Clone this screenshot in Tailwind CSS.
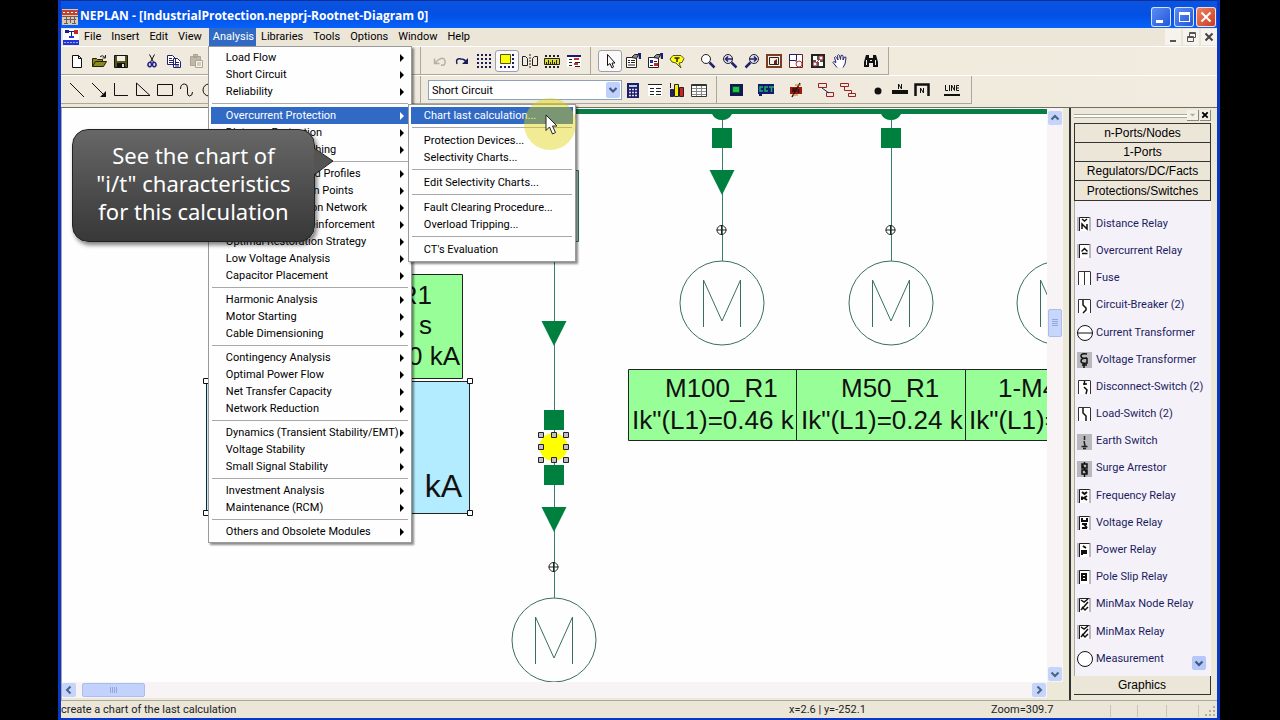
<!DOCTYPE html>
<html lang="en">
<head>
    <meta charset="UTF-8">
    <meta name="viewport" content="width=device-width, initial-scale=1.0">
    <title>NEPLAN</title>
    <script src="https://cdn.jsdelivr.net/npm/@tailwindcss/browser@4"></script>
</head>
<body class="bg-black pr-[60px] pl-[58px] font-[Roboto,sans-serif] text-[11px] text-black">
<div class="relative flex h-screen flex-col overflow-hidden border-x-[3px] border-b-2 border-[#0a37c4] bg-[#ece9d8]">

    <!-- Title bar -->
    <header class="flex h-[28px] shrink-0 items-center border-t border-[#0a2f9c] bg-linear-to-b from-[#0b54e0] via-[#0450e4] to-[#0562fb] pr-px text-white">
        <svg class="mx-px mt-1 h-4 w-4" viewBox="0 0 16 16" shape-rendering="crispEdges">
            <path fill="#d9c8b8" d="M0 0h16v16H0z"/><path fill="#c0432e" d="M0 1h16v5H0z"/>
            <path stroke="#fff" d="M1 3.500h2M5 3.500h2M9 3.500h2M13 3.500h2"/>
            <path stroke="#6b5d55" fill="none" d="M0 7.500h16M2 10.500h12M4 8v7M8 8v6M12 8v7M2 14.500h4M10 14.500h4"/>
        </svg>
        <h1 class="mt-[2px] ml-px flex-1 font-['Open_Sans',sans-serif] text-[12px] font-bold">NEPLAN - [IndustrialProtection.nepprj-Rootnet-Diagram 0]</h1>
        <div class="mt-1 flex gap-[2px]">
            <button aria-label="Minimize" class="h-5 w-5 rounded-[3px] border border-white/80 bg-linear-to-br from-[#5a8cf5] to-[#2456d8]"><svg class="h-full w-full" viewBox="0 0 18 18"><path fill="#fff" d="M4 12h7v3H4z"/></svg></button>
            <button aria-label="Maximize" class="ml-px h-5 w-5 rounded-[3px] border border-white/80 bg-linear-to-br from-[#5a8cf5] to-[#2456d8]"><svg class="h-full w-full" viewBox="0 0 18 18"><path fill="#fff" fill-rule="evenodd" d="M4 4h11v10H4zM5 7v6h9V7z"/></svg></button>
            <button aria-label="Close" class="h-5 w-5 rounded-[3px] border border-white/80 bg-linear-to-br from-[#ee8263] to-[#c93a17]"><svg class="h-full w-full" viewBox="0 0 18 18"><path stroke="#fff" stroke-width="2" d="M4.500 4.500l9 9M13.500 4.500l-9 9"/></svg></button>
        </div>
    </header>

    <!-- Menu bar -->
    <nav class="relative z-20 flex h-[18px] shrink-0 items-stretch bg-[#ece6d8]">
        <svg class="mt-px ml-[2px] h-4 w-4" viewBox="0 0 16 16" shape-rendering="crispEdges">
            <path fill="#fff" d="M0 0h16v16H0z"/><path fill="#1a1a8c" d="M2 1h4v3H2z"/><path fill="#c22" d="M11 1h4v4h-4z"/>
            <path stroke="#1a1a8c" fill="none" d="M6 2.500h5M8.500 3v5"/><path fill="#2233dd" d="M0 11h16v5H0zM6 7h5v2H6z"/>
            <path stroke="#9ad" d="M1 13.500h14" stroke-dasharray="2 1"/>
        </svg>
        <div id="menuBar" class="flex flex-1 items-stretch"></div>
        <div class="flex items-center gap-[2px]">
            <button aria-label="Minimize diagram" class="h-4 w-4 bg-[#f6f3ee]"><svg viewBox="0 0 16 16"><path fill="#555" d="M5 11h6v2H5z"/></svg></button>
            <button aria-label="Restore diagram" class="h-4 w-4 bg-[#f6f3ee]"><svg viewBox="0 0 16 16" fill="none" stroke="#555"><path d="M4.500 7.500h6v5h-6zM4 8.500h7M6.500 7V3.500h6v5H11M6 4.500h7"/></svg></button>
            <button aria-label="Close diagram" class="h-4 w-4 bg-[#f6f3ee]"><svg viewBox="0 0 16 16" stroke="#444" stroke-width="2"><path d="M4.500 4.500l7 7M11.500 4.500l-7 7"/></svg></button>
        </div>
    </nav>

    <!-- Toolbars -->
    <div class="shrink-0 bg-linear-to-r from-[#ece9d8] to-[#f2ebdf] pb-[3px]">
        <div class="flex h-[29px] border-t border-white">
            <div data-tools="new open save | cut copy paste" class="flex w-[360px] items-center border-r border-b border-[#aca899] bg-[#efe9de] pl-[5px]"></div>
            <div data-tools="undo redo grid *page mirror ruler list" class="flex w-[170px] items-center border-r border-b border-[#aca899] bg-[#efe9de] pl-[8px]"></div>
            <div data-tools="*pointer props colorprops tip | zoom zoomback zoomfwd fit window all pan | find" class="flex w-[298px] items-center border-r border-b border-[#aca899] bg-[#efe9de] pl-[7px]"></div>
        </div>
        <div class="flex h-[29px] border-t border-white">
            <div data-tools="line arrow polyline triangle rect curve ellipse" class="flex w-[360px] items-center border-r border-b border-[#aca899] bg-[#efe9de] pl-[5px]"></div>
            <div data-tools="calc columns chart table" class="flex w-[296px] items-center border-r border-b border-[#aca899] bg-[#efe9de] pl-[7px]">
                <div class="relative w-[194px]">
                    <select aria-label="Calculation module" class="h-5 w-full appearance-none border border-[#8aa4c0] bg-white pt-[2px] pl-[3px] text-[11px]"><option>Short Circuit</option></select>
                    <svg class="pointer-events-none absolute top-[2px] right-[2px] h-4 w-[14px] rounded-[2px] bg-[#bfd0fa]" viewBox="0 0 14 16"><path d="M3.500 6L7 9.500 10.500 6" fill="none" stroke="#3f5480" stroke-width="2"/></svg>
                </div>
            </div>
            <div data-tools="chip | cct | pi | link steps | node bus frame | text" class="flex w-[255px] items-center border-r border-b border-[#aca899] bg-[#efe9de] pl-[8px]"></div>
        </div>
    </div>

    <!-- Work area -->
    <main class="flex min-h-0 flex-1 border-t border-[#716f64]">
        <div class="flex min-w-0 flex-1 flex-col border-l border-[#aca899] pb-[2px]">
            <div class="flex min-h-0 flex-1">
                <div class="relative min-w-0 flex-1 overflow-hidden bg-[#fefefe]">
                    <!-- Network diagram -->
                    <svg class="absolute top-0 left-0 h-[574px] w-[985px]" viewBox="62 108 985 574" fill="none" font-family="Liberation Sans, Arial, sans-serif">
                        <defs>
                            <g id="motor" stroke="#39705a">
                                <circle cx="0" cy="0" r="42"/>
                                <path d="M-18.500 24V-23L0 18 18.500-23V24"/>
                            </g>
                            <g id="ct" stroke="#222"><circle cx="0" cy="0" r="4.500"/><path d="M-5 0H5M0-5V5"/></g>
                            <path id="load" fill="#00803f" d="M-12.500 0h25L0 25z"/>
                            <path id="breaker" fill="#00803f" d="M-10-10h20v20h-20z"/>
                            <path id="handle" fill="#c4c0c8" stroke="#222" d="M-2.500-2.500h5v5h-5z"/>
                        </defs>

                        <path fill="#087d45" d="M570 109h477v5H570z"/>
                        <path fill="#b3d3cb" stroke="#39705a" d="M500.500 170.500h78v71h-78z"/>

                        <!-- Feeder with selected breaker -->
                        <path stroke="#39806a" d="M554.500 242v356"/>
                        <use href="#load" x="554" y="321"/>
                        <use href="#breaker" x="554" y="420"/>
                        <circle cx="553.500" cy="447" r="14" fill="#ff0"/>
                        <use href="#breaker" x="554" y="475"/>
                        <use href="#load" x="554" y="507"/>
                        <use href="#handle" x="541" y="435"/><use href="#handle" x="554" y="435"/><use href="#handle" x="566" y="435"/>
                        <use href="#handle" x="541" y="447"/><use href="#handle" x="566" y="447"/>
                        <use href="#handle" x="541" y="460"/><use href="#handle" x="554" y="460"/><use href="#handle" x="566" y="460"/>
                        <use href="#ct" x="553.500" y="567"/>
                        <use href="#motor" x="554" y="640"/>

                        <!-- Motor feeders -->
                        <path stroke="#39806a" d="M722.500 114v147M891.500 114v147"/>
                        <path fill="#00803f" d="M712 114h20q-3 6-10 6t-10-6zM881 114h20q-3 6-10 6t-10-6z"/>
                        <use href="#breaker" x="722" y="138"/>
                        <use href="#breaker" x="891" y="138"/>
                        <use href="#load" x="722" y="170"/>
                        <use href="#ct" x="721.500" y="230"/>
                        <use href="#ct" x="890.500" y="230"/>
                        <use href="#motor" x="722" y="303"/>
                        <use href="#motor" x="891" y="303"/>
                        <use href="#motor" x="1059" y="303"/>

                        <!-- Result boxes -->
                        <path fill="#98ff98" stroke="#222" d="M628.500 369.500h168v71h-168zM796.500 369.500h169v71h-169zM965.500 369.500h169v71h-169zM300.500 274.500h162v104h-162z"/>
                        <g fill="#111" font-size="26">
                            <text x="665" y="397">M100_R1</text>
                            <text x="841" y="397">M50_R1</text>
                            <text x="998" y="397">1-M4</text>
                            <text x="432" y="304" text-anchor="end">R1</text>
                            <text x="432" y="334" text-anchor="end">s</text>
                            <text x="460" y="365" text-anchor="end">0 kA</text>
                            <text x="632" y="429">Ik"(L1)=0.46 k</text>
                            <text x="801" y="429">Ik"(L1)=0.24 k</text>
                            <text x="969" y="429">Ik"(L1)=</text>
                        </g>
                        <path fill="#b4ecff" stroke="#222" d="M206.500 381.500h263v132h-263z"/>
                        <path fill="#fff" stroke="#111" d="M203.500 378.500h5v5h-5zM467.500 378.500h5v5h-5zM203.500 510.500h5v5h-5zM467.500 510.500h5v5h-5z"/>
                        <text x="462" y="497" text-anchor="end" font-size="32" fill="#111">kA</text>
                    </svg>
                </div>
                <!-- Vertical scroll bar -->
                <div class="relative flex w-4 flex-col justify-between bg-[#f8f3f4]">
                    <button aria-label="Scroll up" class="m-px mt-[3px] h-[14px] rounded-[2px] bg-[#c4d4fb]"><svg viewBox="0 0 14 14" fill="none" stroke="#4a6185" stroke-width="2"><path d="M3.500 8.500L7 5l3.500 3.500"/></svg></button>
                    <div class="absolute top-[35%] left-px h-[28px] w-[14px] rounded-[2px] border border-[#a9bdf0] bg-[#c8d6fb]"><svg viewBox="0 0 12 26" stroke="#8ea7e0"><path d="M3 9.500h6M3 11.500h6M3 13.500h6M3 15.500h6"/></svg></div>
                    <button aria-label="Scroll down" class="m-px h-[14px] rounded-[2px] bg-[#c4d4fb]"><svg viewBox="0 0 14 14" fill="none" stroke="#4a6185" stroke-width="2"><path d="M3.500 5.500L7 9l3.500-3.500"/></svg></button>
                </div>
            </div>
            <!-- Horizontal scroll bar -->
            <div class="mr-4 flex h-4 items-center bg-[#f8f3f4]">
                <button aria-label="Scroll left" class="h-[14px] w-[14px] rounded-[2px] bg-[#c4d4fb]"><svg viewBox="0 0 14 14" fill="none" stroke="#4a6185" stroke-width="2"><path d="M8.500 3.500L5 7l3.500 3.500"/></svg></button>
                <div class="ml-[6px] flex h-[14px] w-[63px] items-center justify-center gap-px rounded-[2px] border border-[#a9bdf0] bg-[#c3d2fc]">
                    <span class="h-[6px] w-px bg-[#8ea7e0]"></span><span class="h-[6px] w-px bg-[#8ea7e0]"></span><span class="h-[6px] w-px bg-[#8ea7e0]"></span><span class="h-[6px] w-px bg-[#8ea7e0]"></span>
                </div>
                <button aria-label="Scroll right" class="mr-px ml-auto h-[14px] w-[14px] rounded-[2px] bg-[#c4d4fb]"><svg viewBox="0 0 14 14" fill="none" stroke="#4a6185" stroke-width="2"><path d="M5.500 3.500L9 7l-3.500 3.500"/></svg></button>
            </div>
        </div>

        <!-- Symbol palette -->
        <aside class="ml-[6px] flex w-[148px] flex-col border-l-2 border-[#333] pr-[6px] pb-[5px] pl-[3px]">
            <div class="flex h-[15px] shrink-0 items-center">
                <div class="h-1 flex-1 border-y border-[#aca899] bg-white"></div>
                <button aria-label="Palette menu" class="h-[11px] w-[12px] border-r border-b border-[#8a877c] bg-[#f3f0e8]"><svg viewBox="0 0 12 11"><path fill="#b0ac9c" d="M3 4h6L6 7z"/></svg></button>
                <button aria-label="Close palette" class="ml-px h-[11px] w-[11px] border-r border-b border-[#8a877c] bg-[#f3f0e8]"><svg viewBox="0 0 11 11" stroke="#000" stroke-width="2"><path d="M2.500 2.500l6 6M8.500 2.500l-6 6"/></svg></button>
            </div>
            <div class="flex flex-col border border-[#333] bg-[#333] font-['Liberation_Sans',Arial,sans-serif] text-[12px]">
                <button class="mb-px h-[18px] bg-[#ece6d8]">n-Ports/Nodes</button>
                <button class="mb-px h-[18px] bg-[#ece6d8]">1-Ports</button>
                <button class="mb-px h-[18px] bg-[#ece6d8]">Regulators/DC/Facts</button>
                <button class="h-[19px] bg-[#ece6d8]">Protections/Switches</button>
            </div>
            <div class="relative min-h-0 flex-1 border-l border-[#aaa] bg-[#f4f2f8] pt-[13px] pb-[7px]">
                <ul id="palette" class="flex h-full flex-col justify-between pl-[2px] text-[#1c1c62]"></ul>
                <button aria-label="More symbols" class="absolute right-[5px] bottom-[6px] h-[14px] w-[14px] rounded-[2px] bg-[#b4c8fa]"><svg viewBox="0 0 14 14" fill="none" stroke="#3f5480" stroke-width="2"><path d="M3.500 5.500L7 9l3.500-3.500"/></svg></button>
            </div>
            <button class="h-[19px] shrink-0 border-r border-b border-[#333] bg-[#ece6d8] font-['Liberation_Sans',Arial,sans-serif] text-[12px]">Graphics</button>
        </aside>
    </main>

    <!-- Status bar -->
    <footer class="flex h-[18px] shrink-0 items-center border-t border-[#aca899] bg-[#ece6d8] pt-[2px] text-[#222]">
        <span class="flex-1">create a chart of the last calculation</span>
        <span class="w-[202px]">x=2.6 | y=-252.1</span>
        <span class="w-[119px]">Zoom=309.7</span>
        <span class="h-3 w-[27px] border-l border-[#c9c4b4]"></span>
        <span class="h-3 w-[29px] border-l border-[#c9c4b4]"></span>
        <span class="h-3 w-[32px] border-l border-[#c9c4b4]"></span>
        <span class="h-3 w-[5px] border-l border-[#c9c4b4]"></span>
        <svg class="h-3 w-[14px]" viewBox="0 0 14 12" fill="#b5b09e"><path d="M10 1h2v2h-2zM6 5h2v2H6zM10 5h2v2h-2zM2 9h2v2H2zM6 9h2v2H6zM10 9h2v2h-2z"/></svg>
    </footer>

    <!-- Callout -->
    <div class="absolute top-[129px] left-[11px] z-30 w-[243px] rounded-[16px] border border-[#222] bg-linear-to-b from-[#676767] to-[#383838] pt-[11px] pb-[16px] text-center font-['Noto_Sans',sans-serif] text-[22px] leading-[28px] text-white shadow-[2px_3px_4px_rgba(0,0,0,0.5)]">
        <p>See the chart of<br>"i/t" characteristics<br>for this calculation</p>
        <svg class="absolute top-[17px] left-full h-[30px] w-[20px]" viewBox="0 0 20 30"><path fill="#545454" d="M-2 0L19 14-2 29z"/><path fill="none" stroke="#222" d="M0 1L19 14 0 28"/></svg>
    </div>

    <!-- Mouse pointer -->
    <div class="pointer-events-none absolute top-[98px] left-[463px] z-30 h-[52px] w-[52px] rounded-full bg-[#e1d400]/42">
        <svg class="absolute top-[16px] left-[21px] h-[22px] w-[14px]" viewBox="0 0 14 22"><path fill="#fff" stroke="#222" d="M1 1v15.500l3.500-3.500 3 7 3-1.500-3-6.500h4.500z"/></svg>
    </div>
</div>

<script>
    const menus = ["File", "Insert", "Edit", "View", "Analysis", "Libraries", "Tools", "Options", "Window", "Help"];

    // Groups are divided by a separator line
    const analysisMenu = [
        ["Load Flow", "Short Circuit", "Reliability"],
        ["Overcurrent Protection", "Distance Protection", "Arc Flash and Earthing"],
        ["Calculation of Load Profiles", "Optimal Separation Points", "Optimal Distribution Network", "Optimal Feeder Reinforcement", "Optimal Restoration Strategy", "Low Voltage Analysis", "Capacitor Placement"],
        ["Harmonic Analysis", "Motor Starting", "Cable Dimensioning"],
        ["Contingency Analysis", "Optimal Power Flow", "Net Transfer Capacity", "Network Reduction"],
        ["Dynamics (Transient Stability/EMT)", "Voltage Stability", "Small Signal Stability"],
        ["Investment Analysis", "Maintenance (RCM)"],
        ["Others and Obsolete Modules"],
    ];
    const protectionMenu = [
        ["Chart last calculation..."],
        ["Protection Devices...", "Selectivity Charts..."],
        ["Edit Selectivity Charts..."],
        ["Fault Clearing Procedure...", "Overload Tripping..."],
        ["CT's Evaluation"],
    ];

    const submenu = `
        <div class="absolute -top-[3px] left-[197px] z-10 w-[168px] border border-[#9a9a9a] bg-[#fefefe] p-[2px] pb-[3px] text-black shadow-[2px_2px_2px_rgba(0,0,0,0.45)]">
            ${protectionMenu.map(group => group.map(name => name === "Chart last calculation..."
                ? `<button class="block h-[17px] w-full bg-[#316ac5] pt-px pl-[13px] text-left text-white">${name}</button>`
                : `<button class="block h-[17px] w-full pt-px pl-[13px] text-left">${name}</button>`).join("")
            ).join('<hr class="mx-px mt-[3px] mb-[4px] border-[#a8a8a8]">')}
        </div>`;

    const arrow = '<svg class="h-[8px] w-[5px]" viewBox="0 0 5 8"><path fill="currentColor" d="M0 0l4 4-4 4z"/></svg>';

    const analysis = `
        <div class="absolute top-full -left-px w-[204px] border border-[#9a9a9a] bg-[#fefefe] p-[2px] text-black shadow-[2px_2px_2px_rgba(0,0,0,0.45)]">
            ${analysisMenu.map(group => group.map(name => name === "Overcurrent Protection"
                ? `<div class="relative"><button class="flex h-[17px] w-full items-center justify-between bg-[#316ac5] pt-px pr-[4px] pl-[15px] text-white">${name}${arrow}</button>${submenu}</div>`
                : `<button class="flex h-[17px] w-full items-center justify-between pt-px pr-[4px] pl-[15px]">${name}${arrow}</button>`).join("")
            ).join('<hr class="mx-px my-[3px] border-[#a8a8a8]">')}
        </div>`;

    document.getElementById("menuBar").innerHTML = menus.map(name => name === "Analysis"
        ? `<div class="relative ml-[2px] flex"><button class="bg-[#316ac5] pt-px pr-[2px] pl-[4px] text-white">${name}</button>${analysis}</div>`
        : `<button class="px-[5px] pt-px">${name}</button>`).join("");

    // Toolbar icons, all on a 16 x 16 grid
    const icons = {
        new: '<path fill="#fff" stroke="#111" d="M3.500 2.500h6l3 3v9h-9zM9.500 2.500v3h3"/>',
        open: '<path fill="#8a8a20" stroke="#222200" d="M1.500 13.500v-8h4l1 1h5v2M1.500 13.500l3-5h11l-3 5z"/><path stroke="#222" d="M9 3.500q3-2 5 1M14.500 2v3h-3"/>',
        save: '<path fill="#55551a" stroke="#111" d="M1.500 2.500h13v12h-13z"/><path fill="#f2efe6" d="M4 3h8v5H4z"/><path fill="#111" d="M4 10h8v4H4z"/><path fill="#ddd" d="M9 11h2v3H9z"/>',
        cut: '<path stroke="#111" d="M5.500 1.500L10 10M10.500 1.500L6 10"/><path stroke="#22228c" stroke-width="1.500" d="M7 9.500c-3-1-4 3-2 4s3-1 2-4zM9 9.500c3-1 4 3 2 4s-3-1-2-4z"/>',
        copy: '<path fill="#fff" stroke="#22226c" d="M1.500 2.500h5l3 3v6h-8zM7.500 5.500h4l3 3v6h-7z"/><path stroke="#22226c" d="M3 5.500h3M3 7.500h4M3 9.500h4M9 9.500h4M9 11.500h4M9 13h4"/>',
        paste: '<path fill="#bdb8a8" stroke="#aaa593" d="M2.500 3.500h10v9h-10zM5.500 1.500h4v3h-4z"/><path fill="#f5f3ec" stroke="#aaa593" d="M7.500 7.500h7v7h-7z"/><path stroke="#aaa593" d="M9 10h4M9 12h4"/>',
        undo: '<path stroke="#b5b0a2" stroke-width="1.500" d="M3 10l3-3q6-4 7 1t-4 4M2.500 5.500v5h5"/>',
        redo: '<path stroke="#1c1c5c" stroke-width="1.500" d="M3 11q-2-6 4-5 4 0 6 4"/><path fill="#1c1c5c" d="M14 5v6H8z"/>',
        grid: '<path stroke="#1c1c5c" stroke-width="2" stroke-dasharray="2 2" d="M1 2h14M1 6h14M1 10h14M1 14h14"/>',
        page: '<path fill="#fbff00" stroke="#55551a" d="M1.500 1.500h10v9h-10z"/><path stroke="#1c1c6c" stroke-width="2" stroke-dasharray="2 2" d="M1 14h14M14 1v11"/>',
        mirror: '<path stroke="#222" d="M.500 3.500h3l2 2v7h-5zM15.500 3.500h-3l-2 2v7h5z"/><path stroke="#222" stroke-dasharray="2 1" d="M8 1v14"/>',
        ruler: '<path fill="#d8dc20" stroke="#222" d="M.500 5.500h15v6H.500z"/><path stroke="#222" d="M2.500 11V9M4.500 11V7M6.500 11V9M8.500 11V7M10.500 11V9M12.500 11V7"/><path stroke="#222" stroke-width="2" stroke-dasharray="2 2" d="M1 3h14M1 14h14"/>',
        list: '<path fill="#fff" d="M1 2h14v12H1z"/><path fill="#1c1c6c" d="M1 2h14v2H1z"/><path stroke="#222" d="M3 6.500h3M3 9.500h3M3 12.500h3M9 9.500h5M9 13.500h5"/><path fill="#c33" d="M8 5h5v2H8zM8 10h4v2H8z"/>',
        pointer: '<path fill="#fff" stroke="#111" d="M5.500 1.500v11l2.500-2 2 4.500 1.500-1-1.500-4h3z"/>',
        props: '<path fill="#fff" stroke="#222" d="M1.500 4.500h10v10h-10z"/><path stroke="#222" d="M3 7.500h2M6 7.500h4M3 9.500h2M6 9.500h4M3 12h7"/><path fill="#888" stroke="#222" d="M6.500 4.500l3-3h4l-2 4z"/><path fill="#1c1c6c" d="M13 0h3v6h-2z"/>',
        colorprops: '<path fill="#fff" stroke="#222" d="M1.500 4.500h10v10h-10z"/><path fill="#2525b8" d="M3 7h3v3H3z"/><path fill="#c22" d="M7 10h4v3H7z"/><path stroke="#222" d="M7 8.500h3M3 12.500h3"/><path fill="#888" stroke="#222" d="M6.500 4.500l3-3h4l-2 4z"/><path fill="#1c1c6c" d="M13 0h3v6h-2z"/>',
        tip: '<path fill="#ffff10" stroke="#55551a" d="M4 2.500h8l3 3-2 4-3 .500 2 5-5-5-4-1-2-3z"/><path stroke="#222" stroke-width="1.500" d="M5.500 5h5M8 5v4"/>',
        zoom: '<circle cx="6" cy="6" r="4.500" fill="#fff" stroke="#222"/><path stroke="#22226c" stroke-width="2.500" d="M9.500 9.500l5 5"/>',
        zoomback: '<circle cx="6" cy="6" r="4.500" fill="#dde" stroke="#222"/><path stroke="#22226c" stroke-width="2.500" d="M9.500 9.500l5 5"/><path stroke="#22226c" stroke-width="1.500" d="M3 6h8M6 3.500L3.500 6 6 8.500"/>',
        zoomfwd: '<circle cx="10" cy="6" r="4.500" fill="#dde" stroke="#222"/><path stroke="#22226c" stroke-width="2.500" d="M6.500 9.500l-5 5"/><path stroke="#22226c" stroke-width="1.500" d="M6 6h7M10 3.500l2.500 2.500L10 8.500"/>',
        fit: '<path fill="#f7eee6" stroke="#7c3b22" stroke-width="2" d="M1 2h14v12H1z"/><path stroke="#222" d="M3.500 4.500h9v7h-9z"/><path fill="#622" d="M8 11V8l3-2v5z"/>',
        window: '<path fill="#fff" stroke="#622" d="M1.500 1.500h13v13h-13z"/><path stroke="#22226c" d="M1.500 1.500h7v6h-7z"/><circle cx="11" cy="11" r="3" stroke="#b33"/><path stroke="#b33" d="M7 7.500l2 2"/>',
        all: '<path fill="#fff" stroke="#222" stroke-width="2" d="M2 2h12v12H2z"/><path stroke="#222" stroke-width="1.500" d="M8 2v5M2 8h4M10 8h4M8 9v5"/><circle cx="5" cy="11" r="2" stroke="#b33"/><circle cx="11" cy="5" r="2" stroke="#b33"/><path stroke="#b33" d="M6 10l4-4"/>',
        pan: '<path fill="#fff" stroke="#22226c" d="M5 14.500L1 9.500q0-2 3 0L2.500 4.500q1-1.500 2 0L6 7 5.500 2.500q1-1.500 2 0L8.500 6.500 9 2.500q1.500-1 2 .500L11 7l1.500-3q1.500-.500 1.500 1L13 11l-2 3.500"/>',
        find: '<path fill="#111" d="M3 2h3v3h4V2h3l2 7v5h-5v-4H6v4H1V9z"/><path stroke="#eee" d="M3.500 7v5M12.500 7v5M7 7.500h2"/>',
        line: '<path stroke="#111" d="M1 1l14 14"/>',
        arrow: '<path stroke="#111" d="M1 1l12 12"/><path fill="#111" d="M15 15v-6l-6 6z"/>',
        polyline: '<path stroke="#111" d="M1.500 1v12.500H15"/>',
        triangle: '<path stroke="#111" d="M1.500 1v12.500H15z"/>',
        rect: '<path stroke="#111" d="M.500 2.500h15v11H.500z"/>',
        curve: '<path stroke="#111" d="M1.500 7q0-5 4-5 3 0 3 4v5q0 3 2 3 3 0 3-4"/>',
        ellipse: '<circle cx="8" cy="8" r="6" stroke="#111"/>',
        calc: '<path fill="#1c1c6c" d="M2 1h12v15H2z"/><path fill="#bcd" d="M4 3h8v2H4z"/><path stroke="#dde" stroke-width="1.500" stroke-dasharray="2 1" d="M4 7.500h8M4 10.500h8M4 13.500h8"/>',
        columns: '<path fill="#fff" d="M1 2h14v12H1z"/><path fill="#222" d="M1 2h14v1H1z"/><path stroke="#222" d="M3 6.500h4M9 6.500h5M3 9.500h4M9 9.500h5M3 12.500h4M9 12.500h5"/>',
        chart: '<path fill="#1c1c9c" stroke="#222" d="M1.500 7.500h3v7h-3z"/><path fill="#fbef00" stroke="#222" d="M5.500 2.500h4v12h-4z"/><path fill="#c22" stroke="#222" d="M10.500 5.500h4v9h-4z"/><path stroke="#222" d="M1.500 1v5"/>',
        table: '<path fill="#fff" stroke="#333" d="M.500 2.500h15v12H.500z"/><path stroke="#333" d="M1 3.500h14"/><path stroke="#888" d="M1 6.500h14M1 9.500h14M1 12.500h14M5.500 4v10M10.500 4v10"/>',
        chip: '<path fill="#111a50" d="M2 2h13v12H2z"/><path fill="#20c050" stroke="#052" d="M4.500 4.500h7v6h-7z"/>',
        cct: '<path fill="#111a70" d="M0 2h16v10H0zM1 12h3v2H1z"/><path stroke="#20b060" stroke-width="1.500" d="M5 5H2v4h3M10 5H7v4h3M11 5h5M13.500 5v5"/>',
        pi: '<path fill="#a01810" d="M2 5h12v7H2z"/><path stroke="#301010" stroke-width="1.500" d="M12 1L4 15M5 10V7h3v2H5M10.500 7v4"/><path stroke="#c07010" d="M5 13h5M7 3h6"/>',
        link: '<path stroke="#9c2222" d="M.500 1.500h8v4h-8zM8.500 10.500h7v4h-7z"/><path stroke="#22226c" d="M4 6l7 5"/>',
        steps: '<path stroke="#9c2222" d="M.500 1.500h8v3h-8zM8.500 11.500h7v3h-7zM4.500 5v3.500h7V11"/>',
        node: '<circle cx="8" cy="9" r="3.500" fill="#111"/>',
        bus: '<path fill="#111" d="M0 8h16v4H0z"/><path stroke="#111" d="M6.500 7V2l3 5V2"/>',
        frame: '<path stroke="#111" stroke-width="2.500" d="M1.500 14V2.500h13V14"/><path stroke="#111" d="M6.500 11V6l3 5V6"/>',
        text: '<path fill="#111" d="M0 12h16v2H0z"/><path stroke="#111" d="M1.500 3v5.500H4M5.500 3v6M7.500 9V3l3 5.500V3M15 3.500h-2.500v5H15M13 6h2"/>',
    };

    document.querySelectorAll("[data-tools]").forEach(bar => {
        bar.insertAdjacentHTML("beforeend", bar.dataset.tools.split(" ").map(key => {
            if (key === "|") return bar.dataset.tools.includes("chip") ? '<span class="w-[8px]"></span>' : '<span class="w-[9px]"></span>';
            const name = key.replace("*", "");
            const box = key.startsWith("*")
                ? "flex h-[22px] w-[24px] items-center justify-center rounded-[3px] border border-[#9aa0b0] bg-[#fbfaf8]"
                : "flex h-[22px] w-[22px] items-center justify-center";
            return `<button aria-label="${name}" class="${box}"><svg class="h-4 w-4 shrink-0" viewBox="0 0 16 16" fill="none">${icons[name]}</svg></button>`;
        }).join(""));
    });

    // Palette symbols
    const relay = '<path fill="#b9b9bd" d="M0 1h14v14H0z"/><path fill="#fff" d="M3 2h9v13H3z"/><path stroke="#222" d="M2.500 15V1.500h10"/>';
    const switchBox = '<path fill="#fff" d="M1 1h13v14H1z"/><path stroke="#333" d="M1.500 15V1.500h12M13.500 2v13"/>';
    const grey = '<path fill="#b9b9bd" d="M0 0h15v16H0z"/>';
    const palette = [
        ["Distance Relay", relay + '<path stroke="#111" stroke-width="1.500" d="M5 3l2.500 2L10 3M5 13V8l5 5V8"/>'],
        ["Overcurrent Relay", relay + '<path stroke="#111" stroke-width="1.500" d="M4.500 8.500L7.500 5.500l3 3M5 10.500h5.500"/>'],
        ["Fuse", switchBox + '<path stroke="#333" d="M7.500 2v13"/>'],
        ["Circuit-Breaker (2)", switchBox + '<path stroke="#111" stroke-width="1.500" d="M6 2v5l3 3v2l-3 3"/>'],
        ["Current Transformer", '<circle cx="8" cy="8" r="7.500" fill="#fff" stroke="#111"/><path stroke="#111" d="M0 8h16"/>'],
        ["Voltage Transformer", grey + '<path stroke="#111" stroke-width="1.500" d="M10 2q-6-1-6 2t6 2q-6 0-6 3t6 2V6M7 12v4M5 13h5"/>'],
        ["Disconnect-Switch (2)", switchBox + '<path stroke="#111" stroke-width="1.500" d="M7.500 2v4M6 5h4M7 8l3 3-1 4"/>'],
        ["Load-Switch (2)", switchBox + '<path stroke="#111" stroke-width="1.500" d="M6 2v5l3 3v5"/>'],
        ["Earth Switch", grey + '<path stroke="#222" stroke-width="1.500" d="M7.500 2v4M7 7l1 5M4.500 12.500h6M6 14.500h3"/>'],
        ["Surge Arrestor", grey + '<path stroke="#111" stroke-width="1.500" d="M5 3h5v4H5zM5 9h5v4H5zM5 3l5 10M7.500 1v2M7.500 13v3"/>'],
        ["Frequency Relay", relay + '<path stroke="#111" stroke-width="2" d="M5 4l2.500 2L10 4M5 12V8.500M5 11l5-3M7 10l3 2"/>'],
        ["Voltage Relay", relay + '<path stroke="#111" stroke-width="2" d="M5 3v3h5V3M5 9h5M5 13h5M7 9l3 4"/>'],
        ["Power Relay", relay + '<path stroke="#111" stroke-width="2" d="M5 13V9h4v2H5M6 4l3 2"/>'],
        ["Pole Slip Relay", relay + '<path stroke="#111" stroke-width="2" d="M5 12V5h4v3H5M9 4v8M6 11h4"/>'],
        ["MinMax Node Relay", relay + '<path stroke="#111" stroke-width="1.500" d="M4 3l3 2 4-3M4 13L11 5M5 10l3 3 3-3"/>'],
        ["MinMax Relay", relay + '<path stroke="#111" stroke-width="1.500" d="M4 3l3 2 4-3M4 13L11 5M5 10l3 3 3-3"/>'],
        ["Measurement", '<circle cx="8" cy="8" r="7.500" fill="#fff" stroke="#111"/>'],
    ];
    document.getElementById("palette").innerHTML = palette.map(([name, art]) =>
        `<li class="flex h-5 items-center gap-[3px]"><svg class="h-4 w-4" viewBox="0 0 16 16" fill="none">${art}</svg><a href="#" class="whitespace-nowrap">${name}</a></li>`).join("");
</script>
</body>
</html>
